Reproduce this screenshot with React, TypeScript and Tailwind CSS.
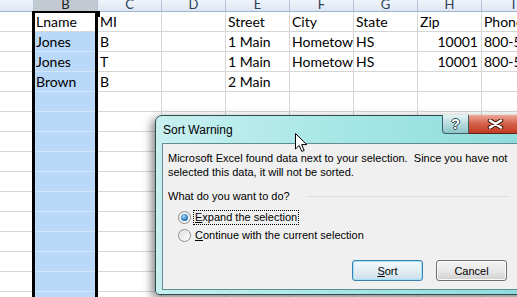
import React from 'react';

const letters = ['', 'B', 'C', 'D', 'E', 'F', 'G', 'H', 'I'];

const data: string[][] = [
  ['', 'Lname', 'MI', '', 'Street', 'City', 'State', 'Zip', 'Phone'],
  ['', 'Jones', 'B', '', '1 Main', 'Hometown', 'HS', '10001', '800-555-1234'],
  ['', 'Jones', 'T', '', '1 Main', 'Hometown', 'HS', '10001', '800-555-1234'],
  ['', 'Brown', 'B', '', '2 Main', '', '', '', ''],
];

const rows: string[][] = Array.from({ length: 15 }, (_, i) => data[i] ?? Array(9).fill(''));

function Radio({ checked }: { checked?: boolean }) {
  return (
    <div className="flex h-[13px] w-[13px] shrink-0 items-center justify-center rounded-full border border-[#8a8d90] bg-gradient-to-br from-[#d4d6d8] via-[#eeeff0] to-[#ffffff] shadow-[inset_0_0_0_1px_#f6f6f6]">
      {checked && (
        <div className="h-[7px] w-[7px] rounded-full bg-[radial-gradient(circle_at_40%_35%,#a6e0ff,#2a79c0_60%,#0f4a82)]" />
      )}
    </div>
  );
}

export default function App() {
  return (
    <div className="relative h-[297px] w-[517px] overflow-hidden bg-white font-['Lato',sans-serif] text-black">
      {/* Column headers */}
      <div className="flex h-[12px] w-[640px] border-b border-[#9eb6ce]">
        {letters.map((l, i) => (
          <div
            key={i}
            className={`flex h-full shrink-0 items-end justify-center overflow-hidden border-r border-[#b4c5d9] text-[13px] leading-none ${
              i === 0 ? 'w-[34px]' : 'w-[64px]'
            } ${
              i === 1
                ? 'bg-[#c3c9d1] text-[#1e1e1e]'
                : 'bg-gradient-to-b from-[#f1f5fb] to-[#dce6f3] text-[#2c3e55]'
            }`}
          >
            {l}
          </div>
        ))}
      </div>

      {/* Cells */}
      {rows.map((r, ri) => (
        <div key={ri} className="flex h-[20px] w-[640px]">
          {r.map((v, ci) => {
            const blue = ci === 1 && ri > 0;
            const num = /^\d+$/.test(v);
            return (
              <div
                key={ci}
                className={`flex h-full shrink-0 items-end overflow-hidden whitespace-nowrap border-b border-r pb-[2px] text-[14px] leading-none ${
                  ci === 0 ? 'w-[34px]' : 'w-[64px]'
                } ${num ? 'justify-end pr-[3px]' : 'pl-[2px]'} ${
                  blue ? 'border-[#d3e5f9] bg-[#bad8f8]' : 'border-[#d6d6d6] bg-white'
                }`}
              >
                {v}
              </div>
            );
          })}
        </div>
      ))}

      {/* Column selection border */}
      <div className="absolute left-[32px] top-[11px] h-[300px] w-[66px] border-x-[3px] border-t-2 border-black" />
      <div className="absolute left-[95px] top-[11px] h-[6px] w-[5px] bg-black" />

      {/* Sort Warning dialog */}
      <div className="absolute left-[155px] top-[115px] flex h-[180px] w-[376px] flex-col rounded-t-[7px] rounded-b-[4px] border border-[#2f4d50] bg-gradient-to-r from-[#c8f0f0] via-[#a6e6e6] to-[#8edcdc] font-['Liberation_Sans',sans-serif] shadow-[-3px_3px_10px_rgba(0,0,0,0.5)]">
        <div className="relative h-[27px] shrink-0 pl-[7px] pt-[7px] text-[12px] leading-[14px] text-black">
          Sort Warning
          <div className="absolute left-[286px] top-[-1px] flex h-[19px]">
            <div className="flex w-[27px] items-center justify-center rounded-bl-[4px] border border-t-0 border-[#3d5f63] bg-gradient-to-b from-[#e4f4f5] via-[#b6dbde] to-[#8ec4c8] pb-px text-[14px] font-bold leading-none text-white [text-shadow:-1px_0_0_#2c4a4e,1px_0_0_#2c4a4e,0_-1px_0_#2c4a4e,0_1px_0_#2c4a4e]">
              ?
            </div>
            <div className="flex w-[54px] items-center justify-center rounded-br-[4px] border border-l-0 border-t-0 border-[#5a2418] bg-gradient-to-b from-[#eaa898] via-[#d45e46] to-[#c23b22]">
              <svg width="17" height="10" viewBox="0 0 17 10">
                <path d="M3 1.5 L14 8.5 M14 1.5 L3 8.5" stroke="#4a1a10" strokeWidth="4.5" strokeLinecap="round" />
                <path d="M3 1.5 L14 8.5 M14 1.5 L3 8.5" stroke="#ffffff" strokeWidth="2.5" strokeLinecap="round" />
              </svg>
            </div>
          </div>
        </div>

        <div className="mx-[6px] mb-[4px] flex flex-1 flex-col border border-[#5f8d90] bg-[#f0f0f0] pl-[5px] pt-[7px] text-[11px] leading-[14px] text-black">
          <p className="whitespace-pre">Microsoft Excel found data next to your selection.  Since you have not</p>
          <p>selected this data, it will not be sorted.</p>
          <div className="mt-[10px] flex items-center">
            <span>What do you want to do?</span>
            <div className="ml-[17px] mr-[14px] h-px flex-1 bg-[#d6dde3]" />
          </div>
          <div className="ml-[10px] mt-[6px] flex h-[16px] items-center">
            <Radio checked />
            <span className="ml-[2px] border border-dotted border-black px-[1px] leading-[13px]">
              <span className="underline">E</span>xpand the selection
            </span>
          </div>
          <div className="ml-[10px] mt-[2px] flex h-[16px] items-center">
            <Radio />
            <span className="ml-[4px]">
              <span className="underline">C</span>ontinue with the current selection
            </span>
          </div>
          <div className="mt-[17px] flex justify-end gap-[13px] pr-[16px]">
            <div className="flex h-[21px] w-[71px] items-center justify-center rounded-[3px] border border-[#3c7fb1] bg-gradient-to-b from-[#f4f9fc] via-[#e3eef5] to-[#c9dde9] shadow-[inset_0_0_0_1px_#9fe3f8]">
              <span className="underline">S</span>ort
            </div>
            <div className="flex h-[21px] w-[71px] items-center justify-center rounded-[3px] border border-[#707070] bg-gradient-to-b from-[#f3f3f3] via-[#e8e8e8] to-[#d0d0d0] shadow-[inset_0_0_0_1px_#fbfbfb]">
              Cancel
            </div>
          </div>
        </div>
      </div>

      {/* Mouse pointer */}
      <svg className="absolute left-[295px] top-[133px]" width="13" height="20" viewBox="0 0 13 20">
        <path d="M0.5 0.5 V16 L4.2 12.4 L6.8 18.4 L9.2 17.4 L6.6 11.6 H11.8 Z" fill="#ffffff" stroke="#000000" strokeWidth="1" strokeLinejoin="round" />
      </svg>
    </div>
  );
}
